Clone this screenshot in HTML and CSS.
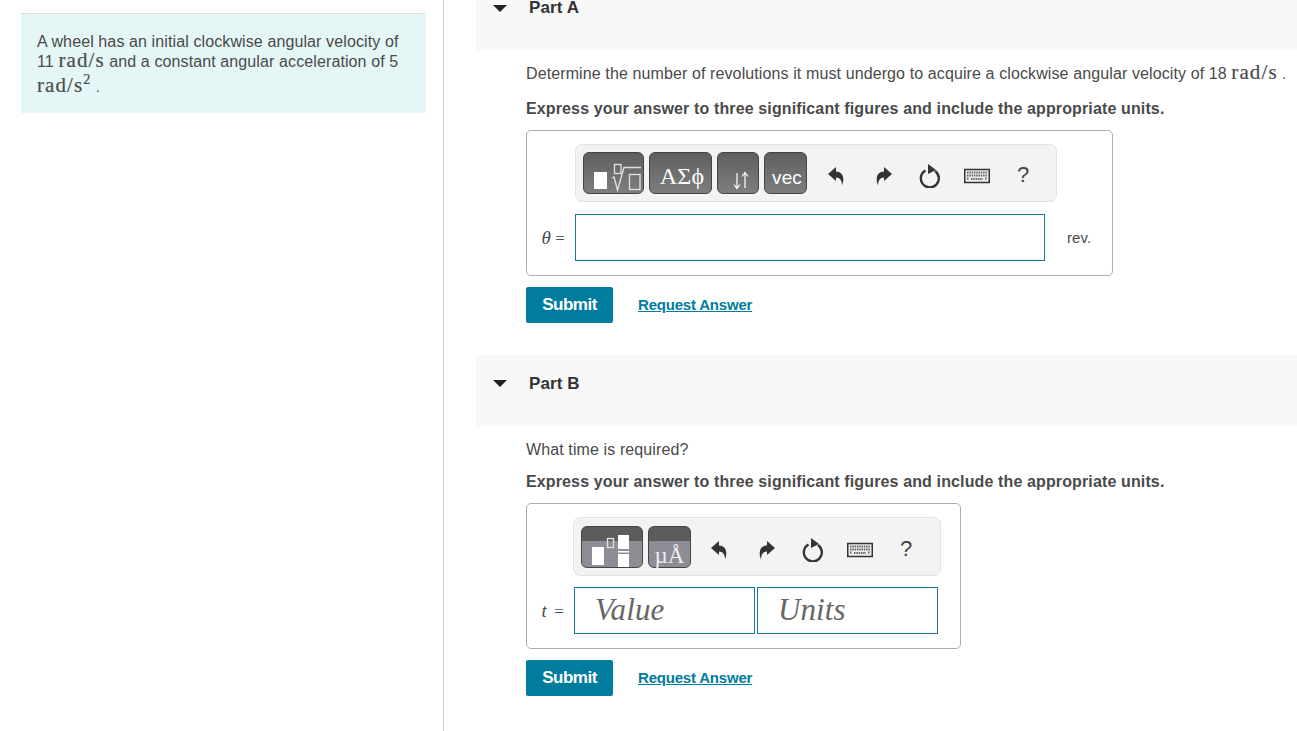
FILE: index.html
```html
<!DOCTYPE html>
<html lang="en">
<head>
    <meta charset="UTF-8">
    <title>Wheel angular velocity</title>
    <link rel="stylesheet" href="styles.css">
</head>
<body>
    <svg class="defs" width="0" height="0">
        <symbol id="undo" viewBox="0 0 18 20">
            <path d="M1 8 9 1v4.500c5.500 0 9.500 5 6 14 0-5-2-8-6-8V15z"/>
        </symbol>
        <symbol id="redo" viewBox="0 0 18 20">
            <path d="M17 8 9 1v4.500c-5.500 0-9.500 5-6 14 0-5 2-8 6-8V15z"/>
        </symbol>
        <symbol id="reset" viewBox="0 0 22 24">
            <path class="ring" d="M6.500 6.500a9 9 0 1 0 9.500 .5"/>
            <path d="M9 0 17 6 9 10z"/>
        </symbol>
        <symbol id="keys" viewBox="0 0 26 16">
            <rect class="kb" x="0.750" y="1.500" width="24.500" height="13"/>
            <path class="kb-keys" d="M3 4.500h20M3 7.500h20M3 10.500h2M7 11h12M21 10.500h2"/>
        </symbol>
    </svg>

    <aside class="side">
        <div class="intro">
            A wheel has an initial clockwise angular velocity of 11 <span class="math">rad/s</span> and a constant angular acceleration of 5 <span class="math math-low">rad/s<sup>2</sup></span> <span class="dot">.</span>
        </div>
    </aside>

    <main class="parts">
        <div class="part-head part-head-a"><span class="caret"></span><span>Part A</span></div>
        <section class="part part-a">
            <p class="question">Determine the number of revolutions it must undergo to acquire a clockwise angular velocity of 18 <span class="math">rad/s</span> <span class="dot">.</span></p>
            <p class="instr">Express your answer to three significant figures and include the appropriate units.</p>
            <div class="answer answer-a">
                <div class="toolbar toolbar-a">
                    <div class="tool tool-templates">
                        <svg width="59" height="40" viewBox="0 0 59 40">
                            <rect class="white" x="10" y="19" width="13" height="17"/>
                            <rect class="hollow" x="30.500" y="11.500" width="6.500" height="9"/>
                            <rect class="hollow" x="45.500" y="21.500" width="10.500" height="15"/>
                            <path class="hollow" d="M28 25l2-1 3.500 13L40 14.500h17"/>
                        </svg>
                    </div>
                    <div class="tool tool-greek">ΑΣϕ</div>
                    <div class="tool tool-arrows">
                        <svg width="18" height="20" viewBox="0 0 18 20">
                            <path class="arrow" d="M5 3v15M2 14.500 5 18.500 8 14.500M13 18V3M10 6.500 13 2.500 16 6.500"/>
                        </svg>
                    </div>
                    <div class="tool tool-vec">vec</div>
                    <div class="actions actions-a">
                        <svg class="act act-undo" width="18" height="20"><use href="#undo"/></svg>
                        <svg class="act act-redo" width="18" height="20"><use href="#redo"/></svg>
                        <svg class="act act-reset" width="22" height="24"><use href="#reset"/></svg>
                        <svg class="act act-keys" width="26" height="16"><use href="#keys"/></svg>
                        <span class="help">?</span>
                    </div>
                </div>
                <div class="entry">
                    <span class="var var-a"><i>θ</i> =</span>
                    <div class="field field-wide"></div>
                    <span class="unit">rev.</span>
                </div>
            </div>
            <div class="buttons">
                <button class="submit">Submit</button>
                <a class="request" href="#">Request Answer</a>
            </div>
        </section>

        <div class="part-head part-head-b"><span class="caret"></span><span>Part B</span></div>
        <section class="part part-b">
            <p class="question">What time is required?</p>
            <p class="instr">Express your answer to three significant figures and include the appropriate units.</p>
            <div class="answer answer-b">
                <div class="toolbar toolbar-b">
                    <div class="tool tool-split tool-templates-b">
                        <svg width="60" height="40" viewBox="0 0 60 40">
                            <rect class="white" x="10" y="20" width="12" height="18"/>
                            <rect class="hollow" x="25.500" y="11.500" width="6" height="9"/>
                            <rect class="white" x="36" y="8" width="11" height="14"/>
                            <rect class="white" x="36" y="24" width="11" height="1.500"/>
                            <rect class="white" x="36" y="27" width="11" height="13"/>
                        </svg>
                    </div>
                    <div class="tool tool-split tool-units">µÅ</div>
                    <div class="actions actions-b">
                        <svg class="act act-undo" width="18" height="20"><use href="#undo"/></svg>
                        <svg class="act act-redo" width="18" height="20"><use href="#redo"/></svg>
                        <svg class="act act-reset" width="22" height="24"><use href="#reset"/></svg>
                        <svg class="act act-keys" width="26" height="16"><use href="#keys"/></svg>
                        <span class="help">?</span>
                    </div>
                </div>
                <div class="entry entry-b">
                    <span class="var var-b"><i>t</i> =</span>
                    <div class="field field-half">Value</div>
                    <div class="field field-half">Units</div>
                </div>
            </div>
            <div class="buttons">
                <button class="submit">Submit</button>
                <a class="request" href="#">Request Answer</a>
            </div>
        </section>
    </main>
</body>
</html>
```

FILE: styles.css
```css
html, body {
    margin: 0;
    height: 100%;
    overflow: hidden;
}
body {
    display: flex;
    font-family: "Liberation Sans", Arial, sans-serif;
    font-size: 16px;
    letter-spacing: 0.11px;
    color: #4a4a4a;
    background: #fff;
}
.defs {
    display: none;
}
.side {
    box-sizing: border-box;
    width: 444px;
    height: 731px;
    flex: none;
    padding: 13px 17px 0 21px;
    border-right: 1px solid #c6ccd2;
}
.intro {
    box-sizing: border-box;
    height: 100px;
    padding: 18px 16px 0;
    background: #e5f6f7;
    border-top: 1px solid #dde3e5;
    line-height: 20px;
}
.math {
    font-family: "Liberation Serif", serif;
    font-size: 21px;
    letter-spacing: 1.1px;
    line-height: 0;
    -webkit-text-stroke: 0.2px #4a4a4a;
}
.math-low {
    display: inline-block;
    line-height: 20px;
    margin-top: 3px;
}
.math sup {
    font-size: 14px;
    line-height: 0;
}
.dot {
    font-size: 14px;
}
.parts {
    flex: 1;
    padding-left: 32px;
    min-width: 0;
}
.part-head {
    display: flex;
    align-items: flex-start;
    background: #f8f8f8;
    color: #333;
    font-weight: bold;
    font-size: 17px;
    line-height: 18px;
}
.part-head-a {
    height: 50px;
}
.part-head-a span:last-child {
    margin-top: -1px;
}
.part-head-b {
    height: 71px;
    padding-top: 20px;
    box-sizing: border-box;
}
.caret {
    width: 0;
    height: 0;
    margin: 5px 22px 0 17px;
    border-left: 7px solid transparent;
    border-right: 7px solid transparent;
    border-top: 7px solid #222;
}
.part {
    padding-left: 50px;
}
.part-a {
    height: 305px;
}
.question {
    margin: 0;
    line-height: 20px;
    white-space: nowrap;
}
.part-a .question {
    padding-top: 14px;
}
.part-b .question {
    padding-top: 14px;
}
.instr {
    margin: 0;
    color: #4a4a4a;
    font-weight: bold;
    letter-spacing: 0.13px;
    line-height: 20px;
    white-space: nowrap;
}
.part-a .instr {
    padding-top: 15px;
}
.part-b .instr {
    padding-top: 12px;
}
.answer {
    box-sizing: border-box;
    height: 146px;
    margin-top: 11px;
    border: 1px solid #adadad;
    border-radius: 5px;
}
.answer-a {
    width: 587px;
}
.answer-b {
    width: 435px;
}
.toolbar {
    box-sizing: border-box;
    display: flex;
    align-items: center;
    background: #f3f3f3;
    border: 1px solid #e2e2e2;
    border-radius: 7px;
}
.toolbar-a {
    width: 482px;
    height: 58px;
    margin: 13px 0 0 48px;
    padding-left: 7px;
    gap: 5px;
}
.toolbar-b {
    width: 368px;
    height: 59px;
    margin: 13px 0 0 46px;
    padding-left: 7px;
    gap: 5px;
}
.tool {
    box-sizing: border-box;
    height: 42px;
    display: flex;
    align-items: center;
    justify-content: center;
    color: #fff;
    border: 1px solid #444;
    border-radius: 6px;
    background: linear-gradient(#5f5f5f, #7e7e7e);
}
.tool-templates {
    width: 61px;
}
.tool-greek {
    width: 63px;
    font-family: "Liberation Serif", serif;
    font-size: 24px;
    padding: 6px 0 0 3px;
}
.tool-arrows {
    width: 42px;
    padding: 14px 0 0 6px;
}
.arrow {
    fill: none;
    stroke: #fff;
    stroke-width: 1.200;
}
.tool-vec {
    width: 43px;
    font-size: 19px;
    padding: 9px 0 0 3px;
}
.tool-split {
    background: linear-gradient(#5c5c5c 0, #5c5c5c 14px, #8d8d96 14px, #8d8d96 100%);
}
.tool-templates-b {
    width: 62px;
}
.tool-units {
    width: 43px;
    font-family: "Liberation Serif", serif;
    font-size: 23px;
    color: #eceef0;
    padding-top: 18px;
}
.white {
    fill: #fff;
}
.hollow {
    fill: none;
    stroke: #e2e2e2;
    stroke-width: 1.300;
}
.actions {
    display: flex;
    align-items: center;
    padding-top: 6px;
}
.actions-a {
    margin-left: 15px;
}
.actions-b {
    margin-left: 14px;
}
.act {
    fill: #333;
    flex: none;
}
.act-redo {
    margin-left: 30px;
}
.act-reset {
    margin-left: 26px;
}
.act-keys {
    margin-left: 23px;
}
.ring {
    fill: none;
    stroke: #333;
    stroke-width: 2.400;
}
.kb {
    fill: #eee;
    stroke: #333;
    stroke-width: 1.500;
}
.kb-keys {
    fill: none;
    stroke: #666;
    stroke-width: 1.800;
    stroke-dasharray: 1.500 0.800;
}
.help {
    margin-left: 27px;
    font-size: 22px;
    line-height: 22px;
    margin-top: -2px;
    color: #444;
}
.entry {
    display: flex;
    align-items: center;
    margin-top: 12px;
}
.entry-b {
    margin-top: 11px;
}
.var {
    font-family: "Liberation Serif", serif;
    font-size: 17px;
    text-align: right;
}
.var i {
    font-size: 19px;
}
.var-a {
    width: 38px;
    margin-right: 10px;
}
.var-b {
    width: 37px;
    margin-right: 10px;
}
.var-b i {
    margin-right: 3px;
}
.field {
    box-sizing: border-box;
    height: 47px;
    border: 1px solid #1a7a9c;
    background: #fff;
}
.field-wide {
    width: 470px;
}
.field-half {
    width: 181px;
    margin-right: 2px;
    padding-left: 20px;
    font-family: "Liberation Serif", serif;
    font-style: italic;
    font-size: 31px;
    line-height: 44px;
    color: #666;
}
.unit {
    margin-left: 22px;
    font-size: 15px;
}
.buttons {
    display: flex;
    align-items: center;
    margin-top: 11px;
}
.submit {
    width: 87px;
    height: 36px;
    padding: 0;
    border: none;
    border-radius: 2px;
    background: #007c9e;
    color: #fff;
    font-family: inherit;
    font-size: 17px;
    font-weight: bold;
    letter-spacing: -0.5px;
}
.request {
    margin-left: 25px;
    margin-top: -2px;
    color: #007c9e;
    font-weight: bold;
    font-size: 15px;
    letter-spacing: -0.2px;
}
```
